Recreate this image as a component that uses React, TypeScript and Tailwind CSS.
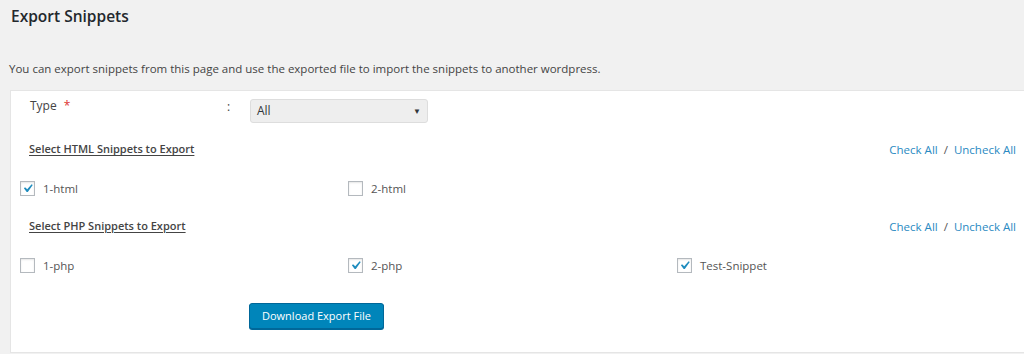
import React, { useState } from "react";

type Snippet = { id: string; name: string; checked: boolean };

const font = { fontFamily: '"Open Sans", "Noto Sans", sans-serif' };

const Checkbox = ({
  checked,
  label,
  onToggle,
}: {
  checked: boolean;
  label: string;
  onToggle: () => void;
}) => (
  <label className="flex items-center gap-[8px] cursor-pointer select-none">
    <span
      onClick={onToggle}
      className="flex h-[15px] w-[15px] items-center justify-center overflow-visible border border-[#b4b9be] bg-white shadow-[inset_0_1px_2px_rgba(0,0,0,0.1)]"
    >
      {checked && (
        <svg width="17" height="17" viewBox="0 0 20 20" className="shrink-0">
          <path
            d="M14.83 4.89l1.34.94-5.81 8.38H9.02L5.78 9.67l1.34-1.25 2.57 2.4z"
            fill="#1e8cbe"
          />
        </svg>
      )}
    </span>
    <span className="text-[11.5px] text-[#555]">{label}</span>
  </label>
);

const Section = ({
  title,
  items,
  setItems,
}: {
  title: string;
  items: Snippet[];
  setItems: (s: Snippet[]) => void;
}) => (
  <div>
    <div className="flex items-center justify-between pl-[18px] pr-[8px]">
      <span className="text-[11px] font-semibold text-[#444] underline underline-offset-2">
        {title}
      </span>
      <span className="text-[11.5px] text-[#2a8ac2]">
        <a className="cursor-pointer" onClick={() => setItems(items.map((i) => ({ ...i, checked: true })))}>
          Check All
        </a>
        <span className="mx-[6px] text-[#555]">/</span>
        <a className="cursor-pointer" onClick={() => setItems(items.map((i) => ({ ...i, checked: false })))}>
          Uncheck All
        </a>
      </span>
    </div>
    <div className="mt-[22px] grid grid-cols-[328px_329px_1fr] pl-[9px]">
      {items.map((s) => (
        <Checkbox
          key={s.id}
          label={s.name}
          checked={s.checked}
          onToggle={() =>
            setItems(items.map((i) => (i.id === s.id ? { ...i, checked: !i.checked } : i)))
          }
        />
      ))}
    </div>
  </div>
);

export default function App() {
  const [html, setHtml] = useState<Snippet[]>([
    { id: "h1", name: "1-html", checked: true },
    { id: "h2", name: "2-html", checked: false },
  ]);
  const [php, setPhp] = useState<Snippet[]>([
    { id: "p1", name: "1-php", checked: false },
    { id: "p2", name: "2-php", checked: true },
    { id: "p3", name: "Test-Snippet", checked: true },
  ]);

  return (
    <div className="min-h-[354px] w-[1024px] bg-[#f1f1f1]" style={font}>
      <h1 className="pl-[11px] pt-[5px] text-[15.5px] font-semibold leading-[22px] text-[#23282d]">
        Export Snippets
      </h1>
      <p className="mt-[34px] pl-[9px] text-[11.5px] leading-[16px] text-[#444]">
        You can export snippets from this page and use the exported file to import the snippets to another wordpress.
      </p>
      <div className="ml-[10px] mt-[13px] h-[263px] border border-r-0 border-[#e5e5e5] bg-white">
        <div className="flex items-start pt-[7px]">
          <span className="w-[216px] pl-[19px] text-[12px] leading-[16px] text-[#444]">
            Type <span className="ml-[4px] text-[#dc3232]">*</span>
          </span>
          <span className="w-[23px] pt-[1px] text-[12px] leading-[16px] text-[#444]">:</span>
          <div className="mt-[1px] flex h-[24px] w-[178px] items-center justify-between rounded-[3px] border border-[#ddd] bg-[#eee] px-[6px] text-[12px] text-[#32373c]">
            <span>All</span>
            <span className="text-[8px]">▼</span>
          </div>
        </div>
        <div className="mt-[18px]">
          <Section title="Select HTML Snippets to Export" items={html} setItems={setHtml} />
        </div>
        <div className="mt-[20px]">
          <Section title="Select PHP Snippets to Export" items={php} setItems={setPhp} />
        </div>
        <div className="mt-[28px] pl-[238px]">
          <button className="h-[26px] rounded-[3px] border border-[#006799] bg-[#0085ba] px-[12px] text-[11px] text-white shadow-[0_1px_0_#006799]">
            Download Export File
          </button>
        </div>
      </div>
    </div>
  );
}
